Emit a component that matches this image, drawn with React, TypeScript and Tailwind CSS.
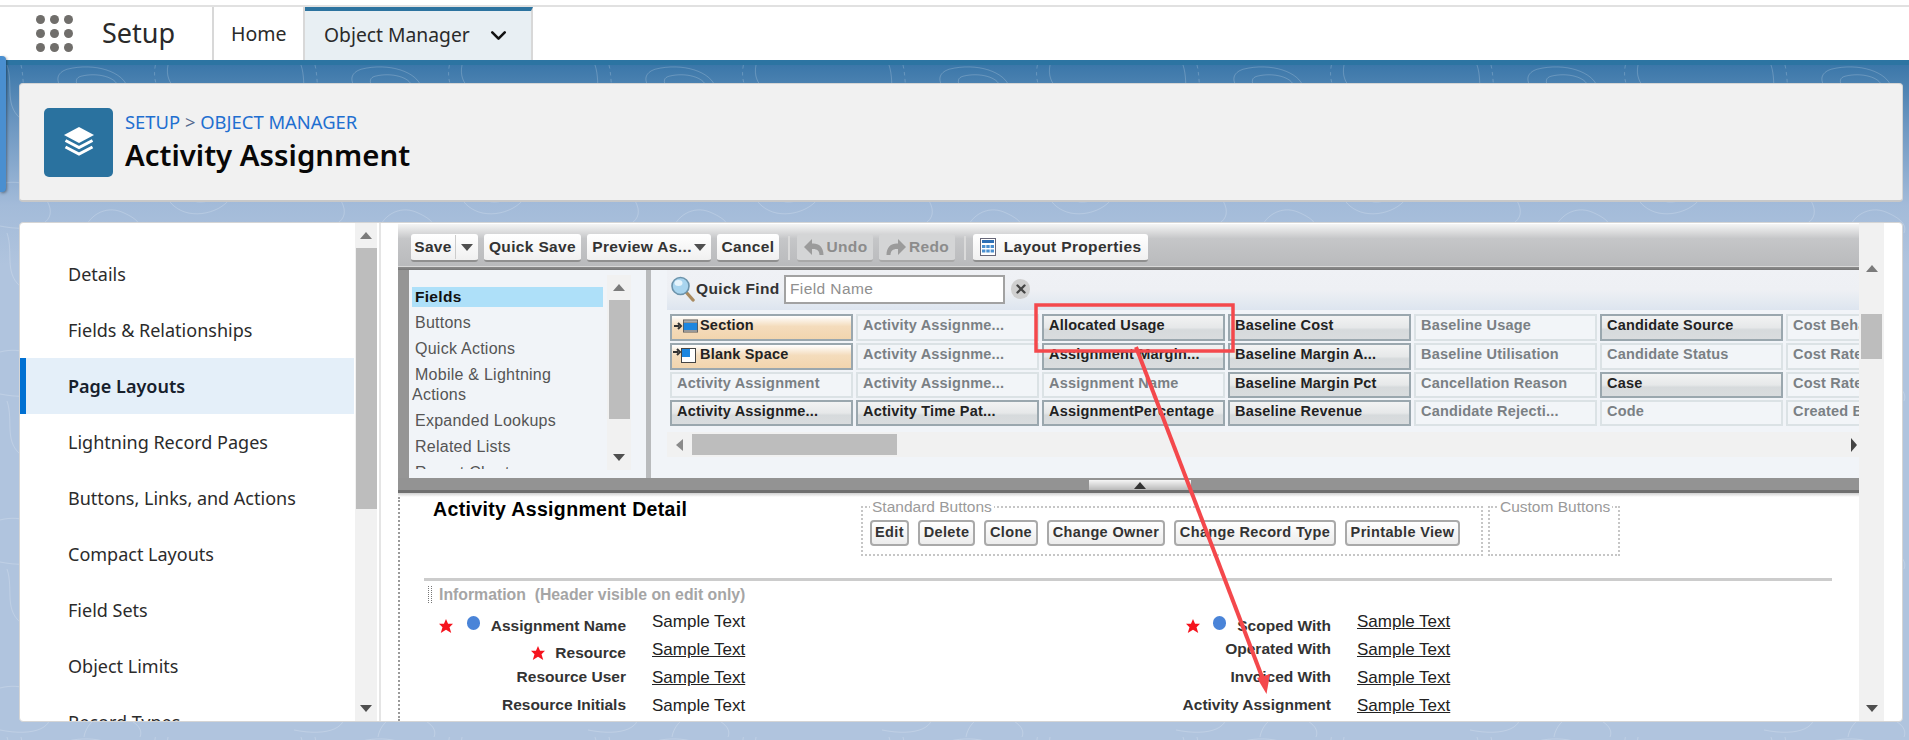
import { ChevronDown, X } from 'lucide-react';

const navItems = [
  'Details',
  'Fields & Relationships',
  'Page Layouts',
  'Lightning Record Pages',
  'Buttons, Links, and Actions',
  'Compact Layouts',
  'Field Sets',
  'Object Limits',
  'Record Types',
];

type Tile = { label: string; on?: boolean; kind?: 'section' | 'blank' };

const tiles: Tile[] = [
  { label: 'Section', kind: 'section' },
  { label: 'Activity Assignme...' },
  { label: 'Allocated Usage', on: true },
  { label: 'Baseline Cost', on: true },
  { label: 'Baseline Usage' },
  { label: 'Candidate Source', on: true },
  { label: 'Cost Behavior' },
  { label: 'Blank Space', kind: 'blank' },
  { label: 'Activity Assignme...' },
  { label: 'Assignment Margin...', on: true },
  { label: 'Baseline Margin A...', on: true },
  { label: 'Baseline Utilisation' },
  { label: 'Candidate Status' },
  { label: 'Cost Rate' },
  { label: 'Activity Assignment' },
  { label: 'Activity Assignme...' },
  { label: 'Assignment Name' },
  { label: 'Baseline Margin Pct', on: true },
  { label: 'Cancellation Reason' },
  { label: 'Case', on: true },
  { label: 'Cost Rate' },
  { label: 'Activity Assignme...', on: true },
  { label: 'Activity Time Pat...', on: true },
  { label: 'AssignmentPercentage', on: true },
  { label: 'Baseline Revenue', on: true },
  { label: 'Candidate Rejecti...' },
  { label: 'Code' },
  { label: 'Created By' },
];

function ArrowUp({ color = 'border-b-[#7b7b7b]' }: { color?: string }) {
  return <span className={`block w-0 h-0 border-x-[6px] border-x-transparent border-b-[7px] ${color}`} />;
}

function ArrowDown() {
  return <span className="block w-0 h-0 border-x-[6px] border-x-transparent border-t-[7px] border-t-[#4f4f4f]" />;
}

function VScroll({ width, thumbTop, thumbHeight, full }: { width: string; thumbTop: string; thumbHeight: string; full?: string }) {
  return (
    <div className={`${width} ${full ?? 'h-full'} bg-[#f1f1f1] flex flex-col items-center shrink-0`}>
      <div className={`${thumbTop} w-full flex items-center justify-center shrink-0`}>
        <ArrowUp />
      </div>
      <div className={`${thumbHeight} w-[21px] bg-[#bdbdbd] shrink-0`} />
      <div className="flex-1 flex items-end justify-center pb-[9px]">
        <ArrowDown />
      </div>
    </div>
  );
}

function ToolButton({ children, width, disabled }: { children: React.ReactNode; width: string; disabled?: boolean }) {
  return (
    <div
      className={`${width} h-[28px] shrink-0 flex items-center justify-center rounded-[3px] text-[15.5px] font-bold tracking-[0.35px] ${
        disabled
          ? 'bg-[#d4d5d6] text-[#8c8c8c] border-b-2 border-b-[#a8a8a8]'
          : 'bg-[linear-gradient(#ffffff,#f0f0f0)] text-[#333333] border-b-2 border-b-[#8f8f8f]'
      }`}
    >
      {children}
    </div>
  );
}

function ToolSep() {
  return <div className="w-[2px] h-[24px] ml-[3px] mr-[1px] bg-[#dadada] shrink-0" />;
}

function HistoryIcon({ flip }: { flip?: boolean }) {
  return (
    <svg width="22" height="20" viewBox="0 0 22 20" className={`mr-[2px] shrink-0 ${flip ? '-scale-x-100' : ''}`}>
      <path d="M1 10 L9 2 L9 6.5 C15.5 6 20.5 9.5 20.5 18 L16.5 18 C16.5 13.5 13.5 11.5 9 12 L9 18 Z" fill="#9b9b9b" />
    </svg>
  );
}

function SectionIcon() {
  return (
    <svg width="26" height="18" viewBox="0 0 26 18" className="shrink-0">
      <path d="M1 9h5M5 6l3 3-3 3" stroke="#333" strokeWidth="2" fill="none" />
      <rect x="10" y="2.5" width="15" height="13" fill="#555" />
      <rect x="10.8" y="3.3" width="13.4" height="2.4" fill="#aaa" />
      <rect x="10.8" y="6" width="13.4" height="7" fill="#1c86e0" />
      <rect x="10.8" y="13.2" width="13.4" height="1.6" fill="#aaa" />
    </svg>
  );
}

function BlankIcon() {
  return (
    <svg width="26" height="20" viewBox="0 0 26 20" className="shrink-0">
      <path d="M0 7h5M4 4l3 3-3 3" stroke="#333" strokeWidth="2" fill="none" />
      <rect x="8.5" y="3.5" width="14" height="14" fill="#fff" stroke="#444" />
      <rect x="9" y="4" width="8" height="8" fill="#1c86e0" />
    </svg>
  );
}

function FieldTile({ tile }: { tile: Tile }) {
  const base = 'h-full border-2 flex items-center text-[14.5px] font-bold tracking-[0.2px] whitespace-nowrap overflow-hidden pb-[3px]';
  if (tile.kind) {
    return (
      <div className={`${base} pl-[1px] gap-[1px] border-[#9aa7ae] bg-[linear-gradient(#ffffff_0%,#f4dcbc_45%,#f2d5ae_100%)] text-[#222222]`}>
        {tile.kind === 'section' ? <SectionIcon /> : <BlankIcon />}
        <span>{tile.label}</span>
      </div>
    );
  }
  if (tile.on) {
    return (
      <div className={`${base} pl-[5px] border-[#9aa7ae] bg-[linear-gradient(#f2f3f3_0%,#e6e8e9_50%,#d6dadc_60%,#d9dcde_100%)] text-[#222222]`}>
        {tile.label}
      </div>
    );
  }
  return <div className={`${base} pl-[5px] border-[#dbe2e5] bg-[#f2f5f8] text-[#7a8084]`}>{tile.label}</div>;
}

function Star() {
  return (
    <svg width="14" height="14" viewBox="0 0 24 24" className="shrink-0">
      <polygon points="12,0 15.5,8 24,8 18,14 21,24 12,18.5 3,24 6,14 0,8 8.5,8" fill="#f5141e" />
    </svg>
  );
}

function Dot() {
  return <span className="block w-[13px] h-[14px] rounded-full bg-[#4a84d8] shrink-0 mb-[7px]" />;
}

function DetailButton({ children, width }: { children: React.ReactNode; width: string }) {
  return (
    <div className={`${width} h-[26px] shrink-0 flex items-center justify-center rounded-[4px] border-2 border-[#a9a9a9] bg-[linear-gradient(#ffffff,#ececec)] text-[#333333] text-[14.5px] font-bold tracking-[0.35px]`}>
      {children}
    </div>
  );
}

function Label({ text, extra, cls }: { text: string; extra?: React.ReactNode; cls: string }) {
  return (
    <div className={`h-[28px] flex items-center justify-end text-[15.5px] font-bold text-[#333333] whitespace-nowrap ${cls}`}>
      {extra}
      <span>{text}</span>
    </div>
  );
}

function Value({ link }: { link?: boolean }) {
  return (
    <div className={`h-[28px] flex items-center text-[17px] text-[#222222] ${link ? 'underline' : ''}`}>
      Sample Text
    </div>
  );
}

function Contours() {
  // faint map lines behind the cards
  return (
    <svg className="absolute inset-0 w-full h-full" aria-hidden="true">
      <defs>
        <pattern id="topo" width="420" height="240" patternUnits="userSpaceOnUse" patternTransform="scale(0.7)">
          <g fill="none" stroke="#ffffff" strokeOpacity="0.2" strokeWidth="1.4">
            <path d="M10 0c10 30-6 60 24 80s70-8 90 18 8 70 36 92" />
            <path d="M30 0c6 24-2 46 22 62s68-10 92 22 6 70 34 96" strokeDasharray="5 5" />
            <path d="M96 6c40-10 80 4 86 26s-30 34-60 24-56-40-26-50z" />
            <path d="M116 16c24-6 50 2 52 14s-18 18-36 14-32-24-16-28z" />
            <path d="M240 0c-6 30 20 46 50 46s60 14 66 44 40 40 64 36" />
            <path d="M222 0c-8 40 24 62 60 62s50 14 56 42 50 50 82 44" strokeDasharray="5 5" />
            <path d="M250 150c30-20 80-10 84 20s-40 50-70 40-40-44-14-60z" />
            <path d="M268 160c20-10 46-6 48 12s-24 28-40 22-24-26-8-34z" />
            <path d="M0 170c30-8 60 4 70 30s-20 40-70 30" />
            <path d="M120 240c4-24 30-40 54-30s30 20 26 30" />
          </g>
        </pattern>
      </defs>
      <rect width="100%" height="100%" fill="url(#topo)" />
    </svg>
  );
}

export default function App() {
  return (
    <div className="relative w-[1909px] h-[740px] overflow-hidden bg-white font-['Lato',sans-serif]">
      <div className="h-[5px] bg-white" />
      <div className="h-[2px] bg-[#e1e1e1]" />

      {/* app bar */}
      <div className="h-[53px] flex bg-white">
        <div className="w-[212px] flex items-center shrink-0">
          <div className="ml-[36px] grid grid-cols-[9px_9px_9px] grid-rows-[9px_9px_9px] gap-[5px] shrink-0">
            {[0, 1, 2, 3, 4, 5, 6, 7, 8].map((d) => (
              <span key={d} className="rounded-full bg-[#706e6b]" />
            ))}
          </div>
          <span className="ml-[29px] text-[27px] text-[#2a2a2a] font-['Noto_Sans',sans-serif]">Setup</span>
        </div>
        <div className="w-[93px] border-x-2 border-[#d8d8d8] flex items-center pl-[17px] text-[19.5px] text-[#2a2a2a] font-['Noto_Sans',sans-serif] shrink-0">
          Home
        </div>
        <div className="w-[228px] border-r-2 border-[#d8d8d8] border-t-4 border-t-[#2c739f] bg-[#e8eff3] flex items-center pl-[19px] text-[19.3px] text-[#2a2a2a] font-['Noto_Sans',sans-serif] shrink-0">
          <span>Object Manager</span>
          <ChevronDown size={25} strokeWidth={2.5} className="ml-[16px] text-[#111]" />
        </div>
      </div>
      <div className="h-[5px] bg-[#2c74a2]" />

      {/* page body */}
      <div className="relative h-[675px] bg-[linear-gradient(#3b77a9_0px,#6d97c1_60px,#a3bbd9_140px,#b0c4de_200px,#b0c4de_100%)]">
        <Contours />
        <div className="absolute left-0 top-[-9px] w-[6px] h-[136px] bg-[#4a8fd0] rounded-r-[4px] shadow-[1px_1px_3px_rgba(0,0,0,0.4)]" />

        <div className="relative pt-[18px] pl-[19px]">
          {/* object header */}
          <div className="w-[1884px] h-[119px] bg-[#f1f1f1] border border-[#d5d5d5] border-b-2 border-b-[#c8c8c8] rounded-[4px] flex items-center pl-[24px]">
            <div className="w-[69px] h-[69px] bg-[#2a729f] rounded-[5px] flex items-center justify-center shrink-0">
              <svg width="30" height="30" viewBox="0 0 30 30">
                <polygon points="15,0 30,8 15,16 0,8" fill="#fff" />
                <path d="M1.5 13.5L15 20.5l13.5-7" fill="none" stroke="#fff" strokeWidth="3" />
                <path d="M1.5 20L15 27l13.5-7" fill="none" stroke="#fff" strokeWidth="3" />
              </svg>
            </div>
            <div className="ml-[12px] pt-[4px]">
              <div className="text-[18.4px] leading-[22px] text-[#1f6fd0] font-['Noto_Sans',sans-serif]">
                SETUP <span className="text-[#54698d]">&gt;</span> OBJECT MANAGER
              </div>
              <div className="text-[29.4px] leading-[44px] font-semibold text-[#080707] font-['Noto_Sans',sans-serif]">
                Activity Assignment
              </div>
            </div>
          </div>

          {/* main card */}
          <div className="mt-[20px] w-[1884px] h-[500px] flex bg-white border border-[#d5d5d5] rounded-[4px] overflow-hidden">
            <div className="w-[334px] shrink-0 pt-[23px] overflow-hidden">
              {navItems.map((item) => {
                const active = item === 'Page Layouts';
                return (
                  <div
                    key={item}
                    className={`h-[56px] flex items-center text-[18px] whitespace-nowrap font-['Noto_Sans',sans-serif] ${
                      active
                        ? 'bg-[#e4eff9] border-l-[6px] border-l-[#0070d2] pl-[42px] font-semibold text-[#16202c]'
                        : 'pl-[48px] text-[#2b2b2b]'
                    }`}
                  >
                    {item}
                  </div>
                );
              })}
            </div>
            <div className="w-[1px] shrink-0" />
            <VScroll width="w-[22px]" thumbTop="h-[25px]" thumbHeight="h-[261px]" />
            <div className="w-[2px] ml-[2px] bg-[#e5e5e5] shrink-0" />
            <div className="w-[17px] shrink-0" />

            {/* page layout editor */}
            <div className="w-[1461px] shrink-0 flex flex-col font-['Liberation_Sans',sans-serif]">
              <div className="h-[42px] mt-[1px] shrink-0 bg-[linear-gradient(#f5f5f5_0%,#c5c6c8_35%,#b9babc_100%)] flex items-center gap-[6px] pl-[13px] pt-[6px]">
                <ToolButton width="w-[67px]">
                  <span className="w-[45px] border-r border-[#ccc] text-center">Save</span>
                  <span className="flex-1 flex justify-center">
                    <ArrowDown />
                  </span>
                </ToolButton>
                <ToolButton width="w-[97px]">Quick Save</ToolButton>
                <ToolButton width="w-[124px]">
                  Preview As...
                  <span className="ml-[2px]">
                    <ArrowDown />
                  </span>
                </ToolButton>
                <ToolButton width="w-[62px]">Cancel</ToolButton>
                <ToolSep />
                <ToolButton width="w-[76px]" disabled>
                  <HistoryIcon />
                  Undo
                </ToolButton>
                <ToolButton width="w-[76px]" disabled>
                  <HistoryIcon flip />
                  Redo
                </ToolButton>
                <ToolSep />
                <ToolButton width="w-[175px]">
                  <svg width="16" height="18" viewBox="0 0 16 18" className="mr-[8px]">
                    <rect x="0.5" y="0.5" width="15" height="17" fill="#fff" stroke="#667" />
                    <rect x="2" y="2" width="12" height="3" fill="#2c6fb5" />
                    <rect x="2" y="7" width="3.4" height="3" fill="#4a90d0" />
                    <rect x="6.3" y="7" width="3.4" height="3" fill="#4a90d0" />
                    <rect x="10.6" y="7" width="3.4" height="3" fill="#4a90d0" />
                    <rect x="2" y="11.5" width="3.4" height="3" fill="#4a90d0" />
                    <rect x="6.3" y="11.5" width="3.4" height="3" fill="#4a90d0" />
                    <rect x="10.6" y="11.5" width="3.4" height="3" fill="#4a90d0" />
                  </svg>
                  Layout Properties
                </ToolButton>
              </div>
              <div className="h-[4px] shrink-0 bg-[linear-gradient(#d8d8d8_0%,#d8d8d8_25%,#8a8a8a_30%,#777777_100%)]" />

              <div className="h-[208px] shrink-0 flex">
                <div className="w-[11px] bg-[#959595] shrink-0" />

                {/* palette categories */}
                <div className="w-[237px] shrink-0 bg-[#f1f4f8] flex">
                  <div className="w-[198px] h-[199px] overflow-hidden flex flex-col gap-[6px] pt-[17px] pl-[3px] pr-[4px] text-[16px] leading-[20px] text-[#555555] shrink-0">
                    <div className="h-[20px] shrink-0 bg-[#aee0f9] pl-[3px] font-bold text-[#111111] tracking-[0.3px] text-[15.5px]">Fields</div>
                    <div className="shrink-0 pl-[3px] tracking-[0.25px]">Buttons</div>
                    <div className="shrink-0 pl-[3px] tracking-[0.25px]">Quick Actions</div>
                    <div className="shrink-0 indent-[3px] tracking-[0.25px]">
                      Mobile &amp; Lightning
                      <br />
                      Actions
                    </div>
                    <div className="shrink-0 pl-[3px] tracking-[0.25px]">Expanded Lookups</div>
                    <div className="shrink-0 pl-[3px] tracking-[0.25px]">Related Lists</div>
                    <div className="shrink-0 pl-[3px] tracking-[0.25px]">Report Charts</div>
                  </div>
                  <div className="pt-[5px] shrink-0">
                    <VScroll width="w-[24px]" full="h-[195px]" thumbTop="h-[25px]" thumbHeight="h-[119px]" />
                  </div>
                </div>
                <div className="w-[5px] bg-[#b9bbbd] shrink-0" />

                {/* palette fields */}
                <div className="flex-1 min-w-0 bg-[#f1f4f8] pl-[16px] overflow-hidden">
                  <div className="h-[40px] bg-[linear-gradient(#eff1f5_0%,#eef0f4_50%,#dde5ef_100%)] flex items-center pl-[4px] pb-[2px]">
                    <svg width="24" height="26" viewBox="0 0 24 26" className="shrink-0">
                      <line x1="15" y1="16" x2="22" y2="24" stroke="#a98a5f" strokeWidth="3.4" strokeLinecap="round" />
                      <circle cx="9.5" cy="10" r="8.5" fill="#a9d5ef" stroke="#6c93ab" strokeWidth="1.6" />
                      <ellipse cx="7.5" cy="7" rx="4" ry="3" fill="#e6f4fc" />
                    </svg>
                    <span className="ml-[1px] w-[88px] text-[15.5px] font-bold text-[#333333] tracking-[0.35px] whitespace-nowrap">Quick Find</span>
                    <div className="w-[221px] h-[29px] bg-white border-2 border-[#a2a2a2] flex items-center pl-[4px] text-[15.5px] text-[#8f8f8f] tracking-[0.4px] shrink-0">
                      Field Name
                    </div>
                    <span className="ml-[6px] w-[19px] h-[20px] rounded-full bg-[#cfcfcf] flex items-center justify-center shrink-0">
                      <X size={14} strokeWidth={4} className="text-[#444444]" />
                    </span>
                  </div>
                  <div className="mt-[4px] pl-[3px] w-[1192px] overflow-hidden">
                    <div className="grid grid-cols-[183px_183px_183px_183px_183px_183px_183px] grid-rows-[27px_27px_26px_26px] gap-x-[3px] gap-y-[2px] w-[1300px]">
                      {tiles.map((t, i) => (
                        <FieldTile key={i} tile={t} />
                      ))}
                    </div>
                  </div>
                  <div className="mt-[6px] h-[25px] bg-[#f1f1f1] flex items-center">
                    <div className="w-[25px] flex justify-center shrink-0">
                      <span className="block w-0 h-0 border-y-[6px] border-y-transparent border-r-[7px] border-r-[#8a8a8a]" />
                    </div>
                    <div className="w-[205px] h-[21px] bg-[#bdbdbd] shrink-0" />
                    <div className="flex-1 flex justify-end pr-[2px]">
                      <span className="block w-0 h-0 border-y-[7px] border-y-transparent border-l-[6px] border-l-[#444444]" />
                    </div>
                  </div>
                </div>
              </div>

              <div className="h-[12px] shrink-0 bg-[#939393] pl-[691px] pt-[2px]">
                <div className="w-[102px] h-[10px] bg-[linear-gradient(#f5f5f5,#b9b9b9)] flex items-center justify-center">
                  <ArrowUp color="border-b-[#333333]" />
                </div>
              </div>
              <div className="h-[3px] shrink-0 bg-[#6f6f6f]" />
              <div className="h-[4px] shrink-0 bg-[linear-gradient(#d0d0d0,#ffffff)]" />

              {/* layout canvas */}
              <div className="flex-1 min-h-0 border-l-2 border-dotted border-[#9a9a9a] overflow-hidden">
                <div className="flex items-start pt-[1px] h-[60px]">
                  <div className="ml-[33px] w-[428px] text-[19.5px] leading-[22px] font-bold text-black tracking-[0.35px] shrink-0">
                    Activity Assignment Detail
                  </div>
                  <fieldset className="w-[622px] h-[58px] border-2 border-dotted border-[#c6c6c6] pl-[7px] shrink-0">
                    <legend className="ml-[0px] px-[2px] text-[15.5px] leading-[18px] text-[#9a9a9a]">Standard Buttons</legend>
                    <div className="flex gap-[9px] mt-[4px]">
                      <DetailButton width="w-[39px]">Edit</DetailButton>
                      <DetailButton width="w-[57px]">Delete</DetailButton>
                      <DetailButton width="w-[54px]">Clone</DetailButton>
                      <DetailButton width="w-[118px]">Change Owner</DetailButton>
                      <DetailButton width="w-[162px]">Change Record Type</DetailButton>
                      <DetailButton width="w-[115px]">Printable View</DetailButton>
                    </div>
                  </fieldset>
                  <fieldset className="ml-[5px] w-[132px] h-[58px] border-2 border-dotted border-[#c6c6c6] shrink-0">
                    <legend className="ml-[8px] px-[2px] text-[15.5px] leading-[18px] text-[#9a9a9a]">Custom Buttons</legend>
                  </fieldset>
                </div>

                <div className="mt-[21px] ml-[24px] w-[1408px] h-[3px] bg-[#cccccc]" />
                <div className="h-[27px] flex items-center pl-[28px]">
                  <span className="w-[4px] h-[17px] border-x border-dotted border-[#777777] shrink-0" />
                  <span className="ml-[7px] text-[15.8px] font-bold text-[#a5a5a5] whitespace-nowrap">
                    Information&nbsp;&nbsp;(Header visible on edit only)
                  </span>
                </div>
                <div className="grid grid-cols-[226px_200px_453px_200px] gap-x-[26px]">
                  <Label
                    text="Assignment Name"
                    cls="pt-[8px]"
                    extra={
                      <>
                        <Star />
                        <span className="w-[14px]" />
                        <Dot />
                        <span className="w-[11px]" />
                      </>
                    }
                  />
                  <Value />
                  <Label
                    text="Scoped With"
                    cls="pt-[8px]"
                    extra={
                      <>
                        <Star />
                        <span className="w-[13px]" />
                        <Dot />
                        <span className="w-[11px]" />
                      </>
                    }
                  />
                  <Value link />
                  <Label
                    text="Resource"
                    cls="pt-[6px]"
                    extra={
                      <>
                        <Star />
                        <span className="w-[10px]" />
                      </>
                    }
                  />
                  <Value link />
                  <Label text="Operated With" cls="pb-[2px]" />
                  <Value link />
                  <Label text="Resource User" cls="pb-[2px]" />
                  <Value link />
                  <Label text="Invoiced With" cls="pb-[2px]" />
                  <Value link />
                  <Label text="Resource Initials" cls="pb-[2px]" />
                  <Value />
                  <Label text="Activity Assignment" cls="pb-[2px]" />
                  <Value link />
                </div>
              </div>
            </div>
            <VScroll width="w-[25px]" thumbTop="h-[91px]" thumbHeight="h-[45px]" />
          </div>
        </div>
      </div>

      {/* annotation drawn over the screenshot */}
      <svg className="absolute inset-0 pointer-events-none" width="1909" height="740">
        <rect x="1036" y="305" width="197" height="46" fill="none" stroke="#f4484c" strokeWidth="3.5" />
        <line x1="1136" y1="347" x2="1264" y2="682" stroke="#f4484c" strokeWidth="4" />
        <polygon points="1266.5,694 1257,678 1270,674" fill="#f4484c" />
      </svg>
    </div>
  );
}
